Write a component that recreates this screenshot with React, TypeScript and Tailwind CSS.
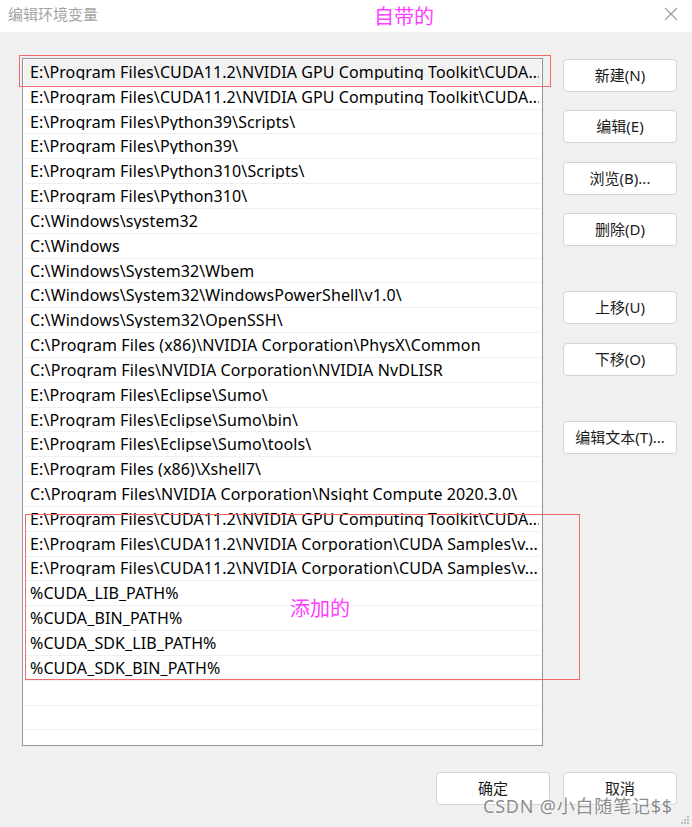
import React from 'react'

const rows = [
  'E:\\Program Files\\CUDA11.2\\NVIDIA GPU Computing Toolkit\\CUDA...',
  'E:\\Program Files\\CUDA11.2\\NVIDIA GPU Computing Toolkit\\CUDA...',
  'E:\\Program Files\\Python39\\Scripts\\',
  'E:\\Program Files\\Python39\\',
  'E:\\Program Files\\Python310\\Scripts\\',
  'E:\\Program Files\\Python310\\',
  'C:\\Windows\\system32',
  'C:\\Windows',
  'C:\\Windows\\System32\\Wbem',
  'C:\\Windows\\System32\\WindowsPowerShell\\v1.0\\',
  'C:\\Windows\\System32\\OpenSSH\\',
  'C:\\Program Files (x86)\\NVIDIA Corporation\\PhysX\\Common',
  'C:\\Program Files\\NVIDIA Corporation\\NVIDIA NvDLISR',
  'E:\\Program Files\\Eclipse\\Sumo\\',
  'E:\\Program Files\\Eclipse\\Sumo\\bin\\',
  'E:\\Program Files\\Eclipse\\Sumo\\tools\\',
  'E:\\Program Files (x86)\\Xshell7\\',
  'C:\\Program Files\\NVIDIA Corporation\\Nsight Compute 2020.3.0\\',
  'E:\\Program Files\\CUDA11.2\\NVIDIA GPU Computing Toolkit\\CUDA...',
  'E:\\Program Files\\CUDA11.2\\NVIDIA Corporation\\CUDA Samples\\v...',
  'E:\\Program Files\\CUDA11.2\\NVIDIA Corporation\\CUDA Samples\\v...',
  '%CUDA_LIB_PATH%',
  '%CUDA_BIN_PATH%',
  '%CUDA_SDK_LIB_PATH%',
  '%CUDA_SDK_BIN_PATH%',
  '',
  '',
  '',
]

const font = { fontFamily: '"Noto Sans", "Noto Sans CJK SC", sans-serif' }

function Btn({ label, className = '' }: { label: string; className?: string }) {
  return (
    <button
      className={`w-[114px] h-[33px] bg-white border border-[#d4d4d4] rounded-[4px] text-[15px] text-[#1a1a1a] flex items-center justify-center ${className}`}
    >
      {label}
    </button>
  )
}

export default function App() {
  return (
    <div className="relative w-[692px] h-[827px] bg-[#f0f0f0] overflow-hidden" style={font}>
      {/* title bar */}
      <div className="h-[32px] bg-white flex items-start justify-between pl-[8px] pr-[14px] pt-[3px]">
        <span className="text-[15px] text-[#a3a3a3]">编辑环境变量</span>
        <svg width="14" height="14" viewBox="0 0 14 14" className="mt-[4px]">
          <path d="M1 1 L13 13 M13 1 L1 13" stroke="#9a9a9a" strokeWidth="1.1" fill="none" />
        </svg>
      </div>

      <div className="flex pl-[22px] pt-[26px]">
        {/* list */}
        <div className="w-[521px] h-[688px] bg-white border border-[#8f939a] pt-[1px] px-[1px] overflow-hidden">
          {rows.map((r, i) => (
            <div
              key={i}
              className={`h-[24.83px] border-b border-[#f0f0f0] flex items-center pl-[6px] pr-[2px] text-[16px] tracking-[0.1px] text-black leading-none ${
                i === 0 ? 'bg-[#f2f2f2]' : ''
              }`}
            >
              <span className="whitespace-nowrap overflow-hidden block w-full">{r}</span>
            </div>
          ))}
        </div>

        {/* side buttons */}
        <div className="flex flex-col ml-[20px] pt-[1px]">
          <Btn label="新建(N)" />
          <Btn label="编辑(E)" className="mt-[18px]" />
          <Btn label="浏览(B)..." className="mt-[19px]" />
          <Btn label="删除(D)" className="mt-[18px]" />
          <Btn label="上移(U)" className="mt-[45px]" />
          <Btn label="下移(O)" className="mt-[19px]" />
          <Btn label="编辑文本(T)..." className="mt-[45px]" />
        </div>
      </div>

      <div className="flex justify-end gap-[13px] pr-[15px] mt-[26px]">
        <Btn label="确定" />
        <Btn label="取消" />
      </div>

      {/* annotations */}
      <div className="absolute left-[19px] top-[55px] w-[532px] h-[32px] border border-[#f06a6a]" />
      <div className="absolute left-[25px] top-[514px] w-[555px] h-[166px] border border-[#f06a6a]" />
      <span className="absolute left-[374px] top-[7px] text-[20px] text-[#ff3cff] leading-none">自带的</span>
      <span className="absolute left-[290px] top-[599px] text-[20px] text-[#ff3cff] leading-none">添加的</span>

      {/* watermark */}
      <span
        className="absolute left-[483px] top-[797px] text-[18px] tracking-[0.8px] text-[#8c8c8c] leading-none"
        style={{ textShadow: '0 0 2px #fff, 0 0 2px #fff' }}
      >
        CSDN @小白随笔记$$
      </span>

      {/* resize grip */}
      <div className="absolute right-[3px] bottom-[3px] grid grid-cols-3 gap-[1px]">
        {[0, 0, 1, 0, 1, 1, 1, 1, 1].map((v, i) => (
          <div key={i} className={`w-[2px] h-[2px] ${v ? 'bg-[#bdbdbd]' : ''}`} />
        ))}
      </div>
    </div>
  )
}
